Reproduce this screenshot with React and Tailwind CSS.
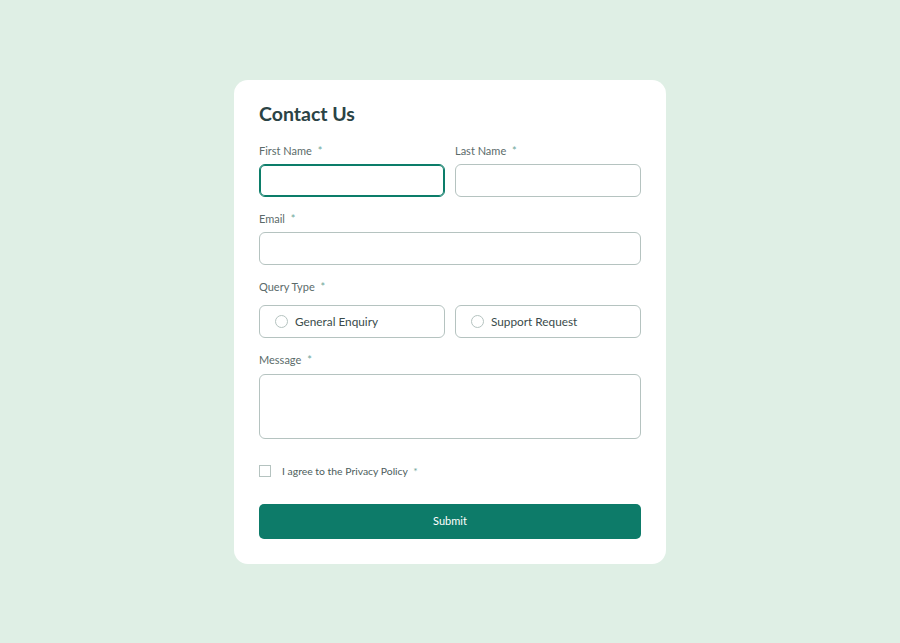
import React from "react";

const Label = ({ children, className = "" }) => (
  <div className={`text-[11px] leading-[14px] text-[#5b6b6a] ${className}`}>
    {children} <span className="ml-[3px] text-[#6fa79b]">*</span>
  </div>
);

const Radio = ({ label }) => (
  <label className="flex h-[33px] flex-1 items-center rounded-[6px] border border-[#b5c3c0] pl-[15px]">
    <span className="h-[13px] w-[13px] rounded-full border border-[#b5c3c0]" />
    <span className="ml-[7px] text-[11.8px] text-[#3a4b4b]">{label}</span>
  </label>
);

export default function App() {
  return (
    <div
      className="flex min-h-[643px] w-full items-start justify-center bg-[#dfefe5] pt-[80px]"
      style={{ fontFamily: "Lato, 'Noto Sans', sans-serif" }}
    >
      <form className="w-[432px] rounded-[14px] bg-white px-[25px] pt-[21px] pb-[25px]">
        <h1 className="text-[19.5px] font-bold leading-[26px] text-[#2b4345]">Contact Us</h1>

        <div className="mt-[17px] flex gap-[10px]">
          <div className="flex-1">
            <Label>First Name</Label>
            <div className="mt-[6px] h-[33px] rounded-[6px] border border-[#0c7d69] shadow-[0_0_0_1px_#0c7d69_inset]" />
          </div>
          <div className="flex-1">
            <Label>Last Name</Label>
            <div className="mt-[6px] h-[33px] rounded-[6px] border border-[#b5c3c0]" />
          </div>
        </div>

        <Label className="mt-[15px]">Email</Label>
        <div className="mt-[6px] h-[33px] rounded-[6px] border border-[#b5c3c0]" />

        <Label className="mt-[15px]">Query Type</Label>
        <div className="mt-[11px] flex gap-[10px]">
          <Radio label="General Enquiry" />
          <Radio label="Support Request" />
        </div>

        <Label className="mt-[15px]">Message</Label>
        <div className="mt-[7px] h-[65px] rounded-[6px] border border-[#b5c3c0]" />

        <div className="mt-[26px] flex items-center">
          <span className="h-[12px] w-[12px] border border-[#b5c3c0]" />
          <span className="ml-[11px] text-[10.4px] leading-[12px] text-[#4c5d5c]">
            I agree to the Privacy Policy <span className="ml-[3px] text-[#6fa79b]">*</span>
          </span>
        </div>

        <button
          type="button"
          className="mt-[27px] flex h-[35px] w-full items-center justify-center rounded-[5px] bg-[#0d7b69] text-[11px] text-white"
        >
          Submit
        </button>
      </form>
    </div>
  );
}
